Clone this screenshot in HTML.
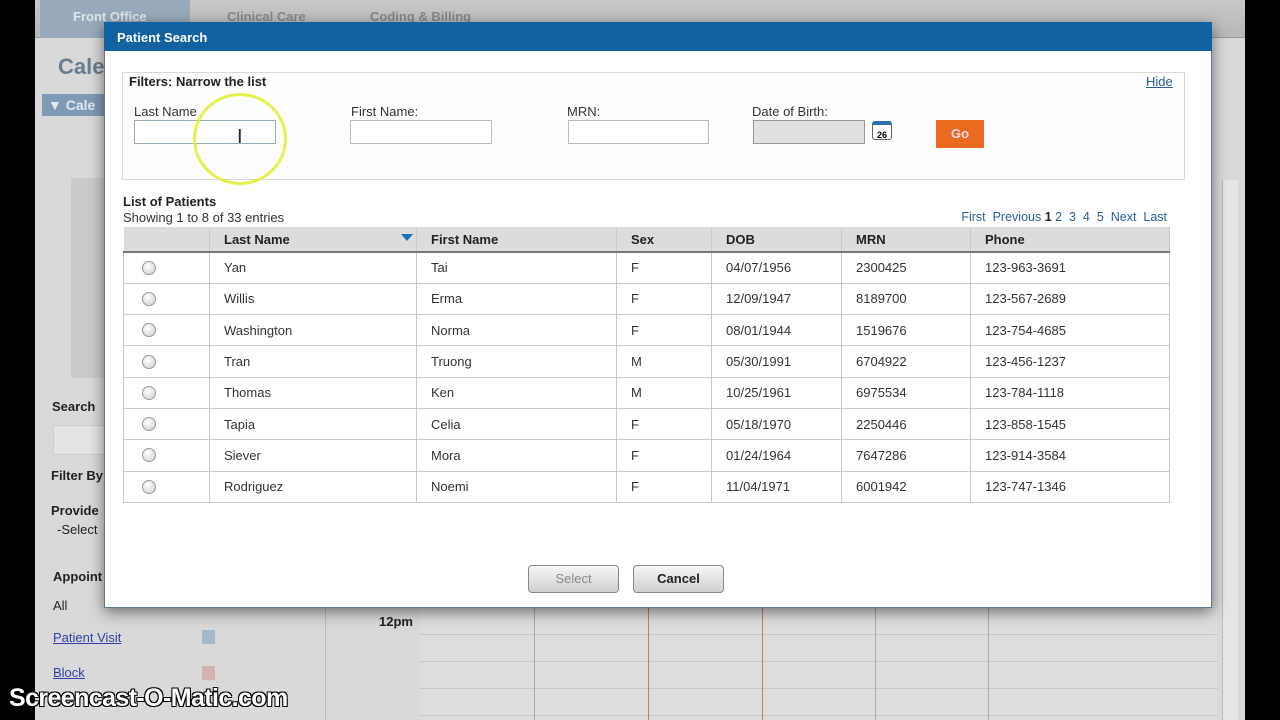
<!DOCTYPE html>
<html><head><style>
*{box-sizing:border-box;margin:0;padding:0}
body{width:1280px;height:720px;overflow:hidden;background:#000;font-family:"Liberation Sans",Arial,sans-serif;position:relative}
.a{position:absolute}
.bg{left:35px;top:0;width:1210px;height:720px;background:#d9d9d9}
.t{font-size:13px;color:#222}
table{border-collapse:collapse;position:absolute;left:123px;top:227px;width:1047px;font-size:13px;color:#333}
th{background:#dcdcdc;height:25px;text-align:left;font-weight:bold;padding-left:14px;border-right:1px solid #c8c8c8;border-bottom:2px solid #777;color:#222}
td{height:31.3px;padding-left:14px;border:1px solid #c8c8c8;background:#fff}
.r{width:14px;height:14px;border-radius:50%;border:1px solid #999;background:radial-gradient(circle at 40% 35%,#fff,#ccc);margin-left:4px}
.btn{position:absolute;height:28px;border:1px solid #888;border-radius:4px;background:linear-gradient(#f6f6f6,#d0d0d0);font-size:13px;text-align:center;line-height:26px}
.inp{position:absolute;height:24px;border:1px solid #bbb;background:#fff}
</style></head><body>
<div class="a bg"></div>
<div class="a" style="left:35px;top:0;width:1210px;height:38px;background:linear-gradient(#c8c8c8,#b8b8b8);border-bottom:1px solid #999"></div>
<div class="a" style="left:40px;top:0;width:150px;height:38px;background:#98aabb"></div>
<div class="a t" style="left:73px;top:9px;color:#dfe6ee;font-weight:bold">Front Office</div>
<div class="a t" style="left:227px;top:9px;color:#888;font-weight:bold">Clinical Care</div>
<div class="a t" style="left:370px;top:9px;color:#888;font-weight:bold">Coding &amp; Billing</div>
<div class="a" style="left:58px;top:54px;font-size:22px;font-weight:bold;color:#6a7d90">Cale</div>
<div class="a" style="left:42px;top:94px;width:70px;height:22px;background:#7f9ab6;color:#e3e9f0;font-size:14px;font-weight:bold;padding:3px 6px">▼ Cale</div>
<div class="a" style="left:71px;top:178px;width:40px;height:200px;background:#cbcbcb"></div>
<div class="a t" style="left:52px;top:399px;font-weight:bold">Search</div>
<div class="a" style="left:53px;top:425px;width:60px;height:30px;background:#e4e4e4;border:1px solid #ccc"></div>
<div class="a t" style="left:51px;top:468px;font-weight:bold">Filter By</div>
<div class="a t" style="left:51px;top:503px;font-weight:bold">Provide</div>
<div class="a t" style="left:57px;top:522px">-Select</div>
<div class="a t" style="left:53px;top:569px;font-weight:bold">Appoint</div>
<div class="a t" style="left:53px;top:598px">All</div>
<div class="a t" style="left:53px;top:630px;color:#3040a8;text-decoration:underline">Patient Visit</div>
<div class="a" style="left:202px;top:630px;width:13px;height:14px;background:#a5b9c9"></div>
<div class="a t" style="left:53px;top:665px;color:#3040a8;text-decoration:underline">Block</div>
<div class="a" style="left:202px;top:666px;width:13px;height:14px;background:#d3b3ae"></div>
<div class="a t" style="left:379px;top:614px;font-weight:bold">12pm</div>
<div class="a" style="left:325px;top:608px;width:1px;height:112px;background:#bbb"></div>
<div class="a" style="left:420px;top:608px;width:798px;height:112px;background:repeating-linear-gradient(#ddd 0 26px,#c8c8c8 26px 27px)"></div>
<div class="a" style="left:534px;top:608px;width:1px;height:112px;background:#aaa"></div>
<div class="a" style="left:648px;top:608px;width:1px;height:112px;background:#c08060"></div>
<div class="a" style="left:762px;top:608px;width:1px;height:112px;background:#c08060"></div>
<div class="a" style="left:875px;top:608px;width:1px;height:112px;background:#aaa"></div>
<div class="a" style="left:988px;top:608px;width:1px;height:112px;background:#aaa"></div>
<div class="a" style="left:1222px;top:180px;width:16px;height:540px;background:#e6e6e6;border-left:1px solid #bbb"></div>
<!-- modal -->
<div class="a" style="left:104px;top:22px;width:1108px;height:586px;background:#fff;box-shadow:0 4px 14px rgba(0,0,0,.5);border:1px solid #5a7890"></div>
<div class="a" style="left:104px;top:22px;width:1108px;height:29px;background:#1262a2;color:#fff;font-size:13px;font-weight:bold;padding:8px 13px">Patient Search</div>
<div class="a" style="left:122px;top:72px;width:1063px;height:108px;border:1px solid #d8d8d8;background:#fdfdfd"></div>
<div class="a t" style="left:129px;top:74px;font-weight:bold">Filters: Narrow the list</div>
<div class="a t" style="left:1146px;top:74px;color:#2a5d9a;text-decoration:underline">Hide</div>
<div class="a t" style="left:134px;top:104px;color:#333">Last Name</div>
<div class="a t" style="left:351px;top:104px;color:#333">First Name:</div>
<div class="a t" style="left:567px;top:104px;color:#333">MRN:</div>
<div class="a t" style="left:752px;top:104px;color:#333">Date of Birth:</div>
<div class="inp" style="left:134px;top:120px;width:142px;border-color:#9ab"></div>
<div class="inp" style="left:350px;top:120px;width:142px"></div>
<div class="inp" style="left:568px;top:120px;width:141px"></div>
<div class="inp" style="left:753px;top:120px;width:112px;background:#e0e0e0;border-color:#999"></div>
<div class="a" style="left:872px;top:121px;width:20px;height:19px;border:1px solid #567;border-radius:3px;background:#fff;font-size:9px;font-weight:bold;text-align:center;padding-top:5px;border-top:4px solid #2a70b0">26</div>
<div class="a" style="left:936px;top:120px;width:48px;height:28px;background:#ea6a1e;color:#fde;font-size:13px;font-weight:bold;text-align:center;line-height:28px">Go</div>
<div class="a" style="left:193px;top:93px;width:94px;height:92px;border:3px solid #e4ef3a;border-radius:50%;opacity:.9"></div>
<div class="a" style="left:237px;top:126px;font-size:20px;color:#222">I</div>
<div class="a t" style="left:123px;top:194px;font-weight:bold">List of Patients</div>
<div class="a t" style="left:123px;top:210px;color:#333">Showing 1 to 8 of 33 entries</div>
<div class="a t" style="right:113px;top:210px;color:#2a5d9a;font-size:12.5px;white-space:nowrap">First &nbsp;Previous <b style="color:#222">1</b> 2 &nbsp;3 &nbsp;4 &nbsp;5 &nbsp;Next &nbsp;Last</div>
<table>
<tr><th style="width:86px"></th><th style="width:207px;position:relative">Last Name<span style="position:absolute;right:3px;top:7px;border:6px solid transparent;border-top:7px solid #1a6fb5;border-bottom:0"></span></th><th style="width:200px">First Name</th><th style="width:95px">Sex</th><th style="width:130px">DOB</th><th style="width:129px">MRN</th><th>Phone</th></tr>
<tr><td><div class="r"></div></td><td>Yan</td><td>Tai</td><td>F</td><td>04/07/1956</td><td>2300425</td><td>123-963-3691</td></tr>
<tr><td><div class="r"></div></td><td>Willis</td><td>Erma</td><td>F</td><td>12/09/1947</td><td>8189700</td><td>123-567-2689</td></tr>
<tr><td><div class="r"></div></td><td>Washington</td><td>Norma</td><td>F</td><td>08/01/1944</td><td>1519676</td><td>123-754-4685</td></tr>
<tr><td><div class="r"></div></td><td>Tran</td><td>Truong</td><td>M</td><td>05/30/1991</td><td>6704922</td><td>123-456-1237</td></tr>
<tr><td><div class="r"></div></td><td>Thomas</td><td>Ken</td><td>M</td><td>10/25/1961</td><td>6975534</td><td>123-784-1118</td></tr>
<tr><td><div class="r"></div></td><td>Tapia</td><td>Celia</td><td>F</td><td>05/18/1970</td><td>2250446</td><td>123-858-1545</td></tr>
<tr><td><div class="r"></div></td><td>Siever</td><td>Mora</td><td>F</td><td>01/24/1964</td><td>7647286</td><td>123-914-3584</td></tr>
<tr><td><div class="r"></div></td><td>Rodriguez</td><td>Noemi</td><td>F</td><td>11/04/1971</td><td>6001942</td><td>123-747-1346</td></tr>
</table>
<div class="btn" style="left:528px;top:565px;width:91px;color:#888">Select</div>
<div class="btn" style="left:633px;top:565px;width:91px;color:#222;font-weight:bold">Cancel</div>
<div class="a" style="left:9px;top:684px;font-size:25px;font-weight:bold;color:#fff;text-shadow:1px 1px 0 #000,-1px -1px 0 #000,1px -1px 0 #000,-1px 1px 0 #000;letter-spacing:-0.6px">Screencast-O-Matic.com</div>
</body></html>
